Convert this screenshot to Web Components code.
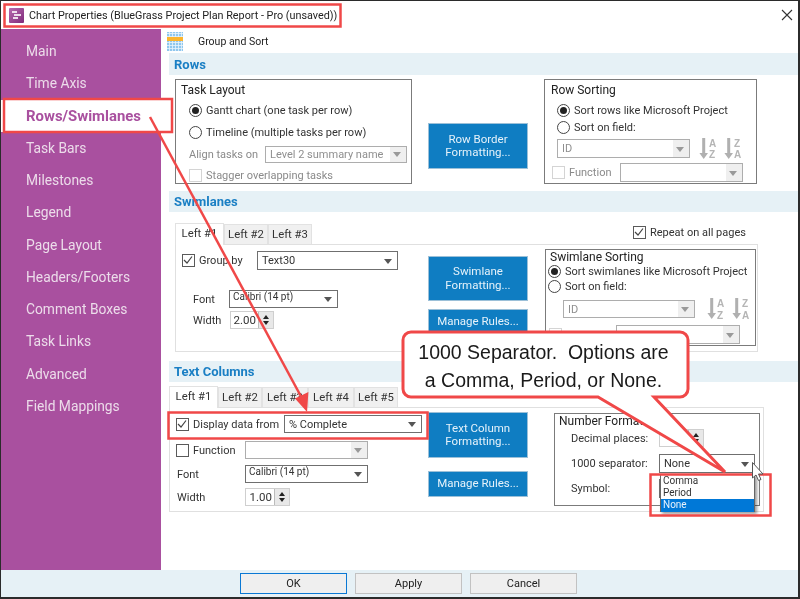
<!DOCTYPE html>
<html>
<head>
<meta charset="utf-8">
<title>Chart Properties</title>
<style>
   html, body { margin: 0; padding: 0; background: #fff; }
   body { width: 800px; height: 599px; position: relative; overflow: hidden; font-family: Roboto, sans-serif; }
</style>
</head>
<body>
<chart-dialog></chart-dialog>
<red-marks></red-marks>

<script>
const 
   ui = ( name, html ) => {
      let t = document.createElement( "template" );
      t.innerHTML = html;
      customElements.define( name, class extends HTMLElement {
         constructor() {
            super();
            this.attachShadow( { mode: "open" } ).append( t.content.cloneNode( true ) );
         }
      } );
   },
   FONT = `font-family: Roboto, sans-serif; font-size: 11px; color: #333;`
;

/* == [ small controls ] == == == == == == == == == */
ui( "ui-check", `
   <style>
      :host { display: inline-flex; align-items: center; gap: 4px; ${FONT} white-space: nowrap; }
      b { box-sizing: border-box; width: 13px; height: 13px; border: 1.5px solid #5a5a5a; display: block; background: #fff; }
      svg { display: none; width: 10px; height: 10px; }
      :host([checked]) svg { display: block; }
      :host([off]) { color: #8a8a8a; }
      :host([off]) b { border-color: #d4d4d4; }
   </style>
   <b><svg viewBox="0 0 10 10"><path d="M1 5 L4 8 L9 1.5" fill="none" stroke="#444" stroke-width="1.2"/></svg></b><slot></slot>
` );

ui( "ui-radio", `
   <style>
      :host { display: inline-flex; align-items: center; gap: 4px; ${FONT} white-space: nowrap; }
      b { box-sizing: border-box; width: 13px; height: 13px; border: 1.3px solid #444; border-radius: 50%; display: grid; place-items: center; background: #fff; }
      i { display: none; width: 7px; height: 7px; border-radius: 50%; background: #222; }
      :host([checked]) i { display: block; }
   </style>
   <b><i></i></b><slot></slot>
` );

ui( "ui-select", `
   <style>
      :host { display: flex; box-sizing: border-box; height: 19px; border: 1.5px solid #6f6f6f; background: #fff; align-items: center; padding-left: 4px; ${FONT} position: relative; white-space: nowrap; }
      i { position: absolute; right: 5px; top: 50%; margin-top: -2px; border: 4px solid transparent; border-top: 5px solid #555; border-bottom: 0; }
      :host([off]) { border-color: #adadad; color: #8f8f8f; }
      :host([off]) u { position: absolute; right: 0; top: 0; bottom: 0; width: 16px; background: #efefef; }
      :host([off]) i { border-top-color: #999; }
      :host([tiny]) { font-size: 10px; align-items: flex-start; line-height: 12px; padding-left: 3px; }
   </style>
   <slot></slot><u></u><i></i>
` );

ui( "ui-spin", `
   <style>
      :host { display: flex; box-sizing: border-box; height: 18px; border: 1.5px solid #cfcfcf; background: #fff; align-items: center; justify-content: flex-end; ${FONT} font-size: 11.5px; position: relative; padding-right: 17px; }
      u { position: absolute; right: 0; top: 0; bottom: 0; width: 14px; background: #e8e8e8; border-left: 1px solid #bbb; display: flex; flex-direction: column; align-items: center; justify-content: space-evenly; }
      i { border: 3px solid transparent; border-top: 0; border-bottom: 4px solid #222; }
      i + i { border-bottom: 0; border-top: 4px solid #222; }
   </style>
   <slot></slot><u><i></i><i></i></u>
` );

ui( "ui-action", `
   <style>
      :host { display: flex; box-sizing: border-box; width: 100px; height: 46px; background: #0f7dc2; border: 1px solid #9cc0d8; color: #e6f2fa; font-family: Roboto, sans-serif; font-size: 11.5px; line-height: 13.5px; text-align: center; align-items: center; justify-content: center; flex: none; }
   </style>
   <span><slot></slot></span>
` );

ui( "ui-tab", `
   <style>
      :host { display: block; box-sizing: border-box; height: 20px; width: 44px; text-align: center; border: 1px solid #e2e2e2; border-bottom: 0; background: #f0f0f0; ${FONT} font-size: 11.3px; line-height: 19px; white-space: nowrap; }
      :host([active]) { height: 22px; width: 49px; background: #fff; position: relative; margin-bottom: -1px; }
   </style>
   <slot></slot>
` );

ui( "ui-group", `
   <style>
      :host { display: block; box-sizing: border-box; border: 1.5px solid #7b7b7b; background: #fff; ${FONT} flex: none; }
   </style>
   <slot></slot>
` );

ui( "section-band", `
   <style>
      :host { display: flex; align-items: center; box-sizing: border-box; background: #e6f1f6; padding-left: 5px; color: #1a7fc4; font-family: Roboto, sans-serif; font-size: 13px; font-weight: 700; height: 21px; }
   </style>
   <slot></slot>
` );

customElements.define( "sort-pair", class extends HTMLElement {
   constructor() {
      super();
      this.attachShadow( { mode: "open" } ).innerHTML = `
         <style>
            :host { display: inline-flex; gap: 7px; flex: none; }
            div { position: relative; width: 18px; height: 22px; }
            svg { display: block; }
            span { position: absolute; left: 10px; font: 700 10px/11.5px "Liberation Sans", sans-serif; color: #b5b5b5; }
            span:first-of-type { top: 0; }
            span + span { top: 11.5px; }
         </style>
         <div><svg width="9" height="22"><path d="M3.2 0 H6.2 V15 H9 L4.7 21 L.4 15 H3.2 Z" fill="#b0b0b0"/></svg><span>A</span><span>Z</span></div>
         <div><svg width="9" height="22"><path d="M3.2 0 H6.2 V15 H9 L4.7 21 L.4 15 H3.2 Z" fill="#b0b0b0"/></svg><span>Z</span><span>A</span></div>
      `;
   }
} );

/* == [ window pieces ] == == == == == == == == == */
ui( "title-bar", `
   <style>
      :host { display: flex; align-items: center; height: 28px; flex: none; padding-left: 8px; font-family: Roboto, sans-serif; font-size: 10.8px; color: #222; background: #fff; }
      svg { flex: none; margin-right: 5px; }
      span { flex: 1; white-space: nowrap; }
      .x { margin: 0 5px 0 0; }
   </style>
   <svg width="15" height="15" viewBox="0 0 15 15">
      <defs><linearGradient id="g" x1="0" y1="0" x2="1" y2="1"><stop offset="0" stop-color="#b86ab0"/><stop offset="1" stop-color="#7f2a7a"/></linearGradient></defs>
      <rect width="15" height="15" rx="1" fill="url(#g)"/>
      <path d="M3 3 H8 V5 H3 Z M5 6 H12 V8 H5 Z M4 9 H9 V11 H4 Z" fill="#eedcec"/>
   </svg>
   <span><slot></slot></span>
   <svg class="x" width="12" height="12" viewBox="0 0 12 12"><path d="M1 1 L11 11 M11 1 L1 11" stroke="#333" stroke-width="1.1"/></svg>
` );

ui( "nav-item", `
   <style>
      :host { display: flex; align-items: center; height: 32.25px; padding-left: 25px; color: #ecdcea; font-family: Roboto, sans-serif; font-size: 13.8px; white-space: nowrap; }
      :host([on]) { background: #fff; color: #a9509f; font-weight: 700; font-size: 14.9px; }
   </style>
   <slot></slot>
` );

ui( "side-nav", `
   <style>
      :host { display: flex; flex-direction: column; box-sizing: border-box; width: 160px; flex: none; background: #a9509f; padding-top: 6px; }
   </style>
   <nav-item>Main</nav-item>
   <nav-item>Time Axis</nav-item>
   <nav-item on>Rows/Swimlanes</nav-item>
   <nav-item>Task Bars</nav-item>
   <nav-item>Milestones</nav-item>
   <nav-item>Legend</nav-item>
   <nav-item>Page Layout</nav-item>
   <nav-item>Headers/Footers</nav-item>
   <nav-item>Comment Boxes</nav-item>
   <nav-item>Task Links</nav-item>
   <nav-item>Advanced</nav-item>
   <nav-item>Field Mappings</nav-item>
` );

ui( "rows-part", `
   <style>
      :host { display: flex; height: 116px; padding: 4px 0 0 6px; box-sizing: border-box; }
      .r { display: flex; align-items: center; }
      .t { font-size: 12px; color: #222; }
      .task { width: 237px; height: 105px; }
      .sort { width: 213px; height: 105px; margin-left: 16px; }
      ui-action { margin: 44px 0 0 16px; }
      .lbl { color: #8a8a8a; width: 76px; }
   </style>
   <ui-group class="task">
      <div class="r t" style="height:20px;padding-left:5px">Task Layout</div>
      <div class="r" style="height:21px;padding-left:13px"><ui-radio checked>Gantt chart (one task per row)</ui-radio></div>
      <div class="r" style="height:22px;padding-left:13px"><ui-radio>Timeline (multiple tasks per row)</ui-radio></div>
      <div class="r" style="height:22px;padding-left:13px"><span class="lbl">Align tasks on</span><ui-select off style="width:142px;height:17px">Level 2 summary name</ui-select></div>
      <div class="r" style="height:20px;padding-left:13px"><ui-check off>Stagger overlapping tasks</ui-check></div>
   </ui-group>
   <ui-action>Row Border<br>Formatting...</ui-action>
   <ui-group class="sort">
      <div class="r t" style="height:20px;padding-left:6px">Row Sorting</div>
      <div class="r" style="height:20px;padding-left:12px"><ui-radio checked>Sort rows like Microsoft Project</ui-radio></div>
      <div class="r" style="height:15px;padding-left:12px"><ui-radio>Sort on field:</ui-radio></div>
      <div class="r" style="height:27px;padding-left:12px"><ui-select off style="width:133px">ID</ui-select><sort-pair style="margin-left:9px"></sort-pair></div>
      <div class="r" style="height:21px;padding-left:7px"><ui-check off style="width:68px">Function</ui-check><ui-select off style="width:123px"></ui-select></div>
   </ui-group>
` );

ui( "swim-part", `
   <style>
      :host { display: block; height: 149px; padding-left: 6px; box-sizing: border-box; }
      .head { display: flex; height: 32px; align-items: flex-end; }
      .panel { display: flex; box-sizing: border-box; width: 583px; height: 108px; border: 1px solid #e0e0e0; }
      .left { width: 252px; flex: none; }
      .r { display: flex; align-items: center; }
      .btns { flex: none; }
      .sort { width: 211px; height: 97px; margin: 4px 0 0 17px; }
      .t { font-size: 12px; color: #222; }
   </style>
   <div class="head">
      <ui-tab active>Left #1</ui-tab><ui-tab>Left #2</ui-tab><ui-tab>Left #3</ui-tab>
      <ui-check checked style="align-self:flex-start;margin:14px 0 0 321px">Repeat on all pages</ui-check>
   </div>
   <div class="panel">
      <div class="left">
         <div class="r" style="margin-top:6px;padding-left:6px;height:19px"><ui-check checked style="width:75px">Group by</ui-check><ui-select style="width:141px">Text30</ui-select></div>
         <div class="r" style="margin-top:20px;padding-left:17px;height:18px"><span style="width:36px">Font</span><ui-select tiny style="width:109px;height:18px">Calibri (14 pt)</ui-select></div>
         <div class="r" style="margin-top:3px;padding-left:17px;height:18px"><span style="width:37px">Width</span><ui-spin style="width:44px">2.00</ui-spin></div>
      </div>
      <div class="btns">
         <ui-action style="height:45px;margin-top:11px">Swimlane<br>Formatting...</ui-action>
         <ui-action style="height:26px;margin-top:8px">Manage Rules...</ui-action>
      </div>
      <ui-group class="sort">
         <div class="r t" style="height:14px;padding-left:4px">Swimlane Sorting</div>
         <div class="r" style="height:15px;padding-left:2px"><ui-radio checked>Sort swimlanes like Microsoft Project</ui-radio></div>
         <div class="r" style="height:15px;padding-left:2px"><ui-radio>Sort on field:</ui-radio></div>
         <div class="r" style="height:30px;padding-left:17px"><ui-select off style="width:132px;height:18px">ID</ui-select><sort-pair style="margin-left:12px"></sort-pair></div>
         <div class="r" style="height:21px;padding-left:3px"><ui-check off style="width:67px"></ui-check><ui-select off style="width:124px"></ui-select></div>
      </ui-group>
   </div>
` );

ui( "cols-part", `
   <style>
      :host { display: block; padding-top: 5px; box-sizing: border-box; }
      .head { display: flex; height: 20px; align-items: flex-end; }
      .head ui-tab:nth-child(3), .head ui-tab:nth-child(4) { width: 46px; }
      .panel { display: flex; box-sizing: border-box; width: 595px; height: 105px; border: 1px solid #e0e0e0; }
      .left { width: 258px; flex: none; }
      .r { display: flex; align-items: center; }
      .btns { flex: none; }
      .num { width: 206px; height: 93px; margin: 5px 0 0 26px; }
      .t { font-size: 12px; color: #222; }
      .lbl { width: 88px; }
   </style>
   <div class="head">
      <ui-tab active>Left #1</ui-tab><ui-tab>Left #2</ui-tab><ui-tab>Left #3</ui-tab><ui-tab>Left #4</ui-tab><ui-tab>Left #5</ui-tab>
   </div>
   <div class="panel">
      <div class="left">
         <div class="r" style="margin-top:7px;padding-left:6px;height:18px"><ui-check checked style="width:108px">Display data from</ui-check><ui-select style="width:138px;height:18px">% Complete</ui-select></div>
         <div class="r" style="margin-top:8px;padding-left:6px;height:18px"><ui-check style="width:69px">Function</ui-check><ui-select off style="width:123px;height:18px"></ui-select></div>
         <div class="r" style="margin-top:6px;padding-left:7px;height:18px"><span style="width:68px">Font</span><ui-select tiny style="width:123px;height:18px">Calibri (14 pt)</ui-select></div>
         <div class="r" style="margin-top:5px;padding-left:7px;height:18px"><span style="width:68px">Width</span><ui-spin style="width:45px">1.00</ui-spin></div>
      </div>
      <div class="btns">
         <ui-action style="margin-top:4px">Text Column<br>Formatting...</ui-action>
         <ui-action style="height:26px;margin-top:13px">Manage Rules...</ui-action>
      </div>
      <ui-group class="num">
         <div class="r t" style="height:13px;padding-left:4px">Number Format</div>
         <div class="r" style="margin-top:2px;height:18px;padding-left:16px"><span class="lbl">Decimal places:</span><ui-spin style="width:45px"></ui-spin></div>
         <div class="r" style="margin-top:7px;height:19px;padding-left:16px"><span class="lbl">1000 separator:</span><ui-select style="width:96px">None</ui-select></div>
         <div class="r" style="margin-top:6px;height:19px;padding-left:16px"><span class="lbl">Symbol:</span><ui-select style="width:96px"></ui-select></div>
      </ui-group>
   </div>
` );

ui( "main-pane", `
   <style>
      :host { display: flex; flex-direction: column; flex: 1; padding-left: 8px; box-sizing: border-box; background: #fff; ${FONT} }
      .top { display: flex; align-items: center; height: 24px; margin-left: -2px; flex: none; }
      .top span { margin-left: 15px; font-size: 10.5px; color: #222; }
      svg { display: block; }
   </style>
   <div class="top">
      <svg width="16" height="19" viewBox="0 0 16 19">
         <rect width="16" height="19" fill="#8fc7ee"/>
         <rect y="5" width="16" height="4" fill="#fbb52e"/>
         <path d="M0 1.5 H16 M0 4.5 H16 M0 10.5 H16 M0 13.5 H16 M0 16.5 H16 M2.5 0 V5 M2.5 9 V19 M5.5 0 V5 M5.5 9 V19 M8.5 0 V5 M8.5 9 V19 M11.5 0 V5 M11.5 9 V19 M14.5 0 V5 M14.5 9 V19" stroke="#fff" stroke-width=".8" opacity=".8"/>
      </svg>
      <span>Group and Sort</span>
   </div>
   <section-band style="height:22px">Rows</section-band>
   <rows-part></rows-part>
   <section-band>Swimlanes</section-band>
   <swim-part></swim-part>
   <section-band>Text Columns</section-band>
   <cols-part></cols-part>
` );

ui( "foot-btn", `
   <style>
      :host { display: flex; box-sizing: border-box; width: 107px; height: 21px; border: 1.5px solid #c2c2c2; background: #efefef; align-items: center; justify-content: center; font-family: Roboto, sans-serif; font-size: 11px; color: #222; flex: none; }
      :host([main]) { border-color: #0a78d4; }
   </style>
   <slot></slot>
` );

ui( "foot-bar", `
   <style>
      :host { display: flex; height: 27px; flex: none; background: #e6f1f6; align-items: center; gap: 8px; padding-left: 239px; box-sizing: border-box; }
   </style>
   <foot-btn main>OK</foot-btn><foot-btn>Apply</foot-btn><foot-btn>Cancel</foot-btn>
` );

ui( "chart-dialog", `
   <style>
      :host { display: flex; flex-direction: column; box-sizing: border-box; width: 800px; height: 599px; border: solid #2b2b2b; border-width: 1px 2px 2px 1px; background: #fff; filter: blur(.35px); }
      .body { display: flex; flex: 1; min-height: 0; }
   </style>
   <title-bar>Chart Properties (BlueGrass Project Plan Report - Pro (unsaved))</title-bar>
   <div class="body"><side-nav></side-nav><main-pane></main-pane></div>
   <foot-bar></foot-bar>
` );

/* == [ what lies over the dialog: list, marks, callout ] == == == == == == == == == */
ui( "drop-list", `
   <style>
      :host { position: absolute; left: 660px; top: 474px; width: 95px; height: 38px; box-sizing: border-box; background: #fff; border: 1px solid #666; border-top: 0; box-shadow: 2px 2px 3px #0006; font-family: Roboto, sans-serif; font-size: 10px; color: #333; line-height: 12px; padding-top: 1px; }
      div { padding-left: 2px; height: 12px; }
      .on { background: #0078d7; color: #e8f2fb; height: 13px; }
   </style>
   <div>Comma</div><div>Period</div><div class="on">None</div>
` );

ui( "red-marks", `
   <style>
      :host { position: absolute; left: 0; top: 0; width: 800px; height: 599px; pointer-events: none; filter: blur(.3px); }
      svg { position: absolute; left: 0; top: 0; }
      p { position: absolute; left: 401px; top: 338px; width: 285px; margin: 0; text-align: center; white-space: pre; font: 19.5px/28px "Liberation Sans", sans-serif; color: #1a1a1a; }
   </style>
   <drop-list></drop-list>
   <svg width="800" height="599" viewBox="0 0 800 599" fill="none" stroke="#f04848" stroke-width="2.5">
      <rect x="4.5" y="4.5" width="336" height="22"/>
      <rect x="4" y="99" width="168" height="33"/>
      <rect x="168.5" y="412.5" width="259" height="26"/>
      <rect x="650.5" y="474.5" width="120" height="41"/>
      <path d="M150 117 L304 402" />
      <path d="M306 409 L297 399 L307 394 Z" fill="#f04848"/>
      <path d="M411 332 H680 a8 8 0 0 1 8 8 V389 a8 8 0 0 1 -8 8 H654 L725 472 L598 397 H411 a8 8 0 0 1 -8 -8 V340 a8 8 0 0 1 8 -8 Z" fill="#fff" stroke-width="3"/>
      <path d="M752.5 462.5 V478 l3.5 -3 l2.5 5.5 l2.5 -1 l-2.5 -5.5 h4.5 Z" fill="#fff" stroke="#555" stroke-width="1"/>
   </svg>
   <p>1000 Separator.  Options are
a Comma, Period, or None.</p>
` );
</script>
</body>
</html>
